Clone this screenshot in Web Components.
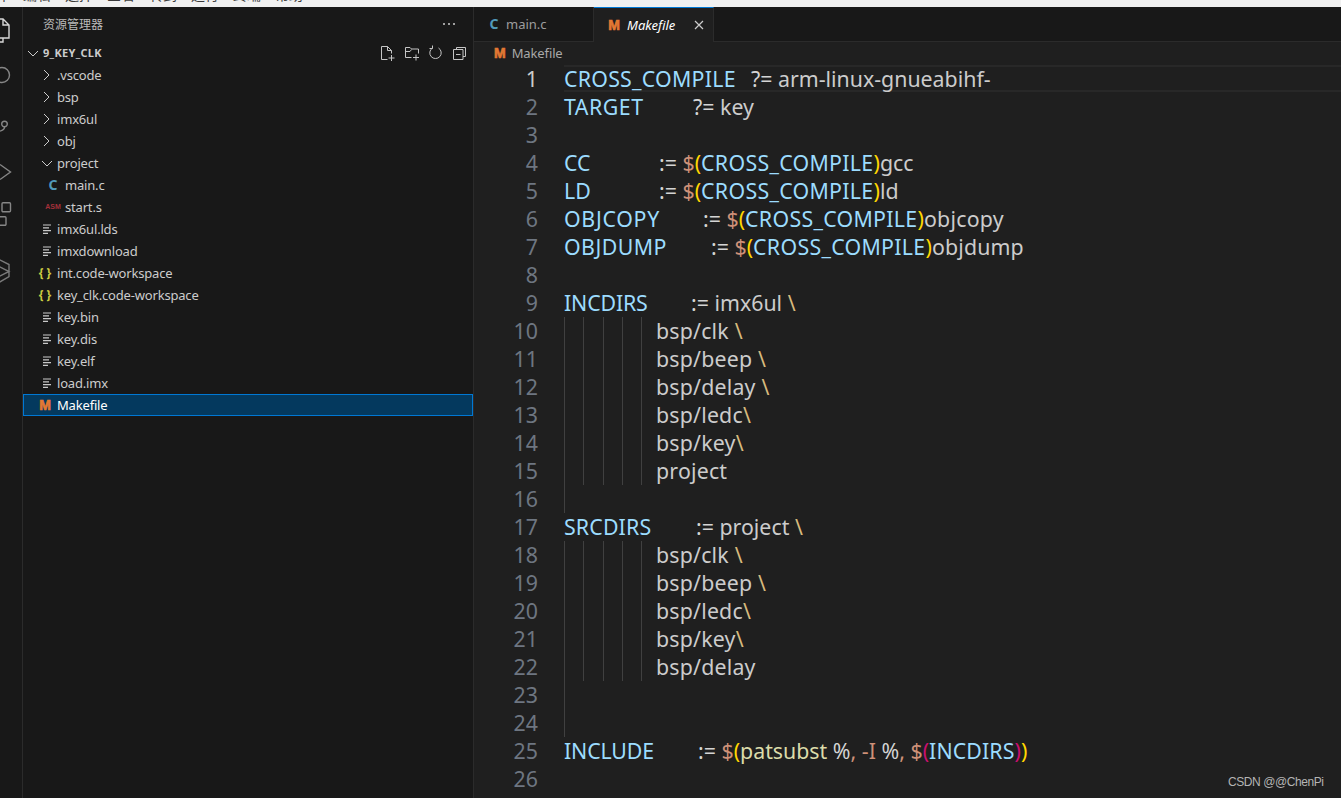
<!DOCTYPE html>
<html lang="en"><head><meta charset="utf-8"><title>Makefile - VS Code</title>
<style>html,body{margin:0;padding:0;background:#1f1f1f;overflow:hidden}</style></head>
<body>
<vs-app>
  <menu-strip slot="menu"></menu-strip>
  <activity-bar slot="activity"></activity-bar>
  <explorer-view slot="side"></explorer-view>
  <editor-view slot="main"></editor-view>
</vs-app>
<script>
const FONT = '"Noto Sans","Noto Sans CJK SC",sans-serif';
function def(name, html, setup){
  customElements.define(name, class extends HTMLElement{
    connectedCallback(){
      if(this.shadowRoot) return;
      const r=this.attachShadow({mode:'open'});
      r.innerHTML = typeof html==='function'?html(this):html;
      if(setup) setup(r,this);
    }
  });
}
const S = (w,h,body,extra='')=>`<svg width="${w}" height="${h}" viewBox="0 0 ${w} ${h}" fill="none" stroke="currentColor" stroke-width="1" ${extra}>${body}</svg>`;

def('vs-app',`<style>
:host{display:grid;grid-template-columns:23px 451px 867px;grid-template-rows:7px 791px;width:1341px;height:798px;overflow:hidden;font-family:${FONT};position:relative}
::slotted([slot=menu]){grid-column:1/4}
.mark{position:absolute;left:1228px;top:774px;font:12px/16px "Liberation Sans",sans-serif;color:#b4b4b4;letter-spacing:-.42px}
</style><slot name="menu"></slot><slot name="activity"></slot><slot name="side"></slot><slot name="main"></slot><div class="mark">CSDN @@ChenPi</div>`);

def('menu-strip',`<style>
:host{display:block;height:7px;background:#f0f0f0;overflow:hidden}
div{display:flex;margin:-14px 0 0 -19px;font:14px/16px "Noto Sans CJK SC",sans-serif;color:#3a3a3a;gap:14px}
</style><div><span>文件</span><span>编辑</span><span>选择</span><span>查看</span><span>转到</span><span>运行</span><span>终端</span><span>帮助</span></div>`);

const act=(body,col)=>`<svg width="22" height="48" viewBox="0 -24 22 48" fill="none" stroke="${col}" stroke-width="1.4">${body}</svg>`;
def('activity-bar',`<style>
:host{display:flex;flex-direction:column;background:#181818;border-right:1px solid #2b2b2b;overflow:hidden}
svg{display:block;flex:none}
</style>`+
act('<path d="M-6-12H3L9-6V7H3V11H-8M3-12V-6H9M3 7H-4"/>','#d7d7d7')+
act('<circle cx="2" cy="-4" r="7.5"/>','#868686')+
act('<circle cx="4.5" cy="-3" r="2.8"/><path d="M4.5 0C4.5 3 2 4 -2 4.5"/>','#868686')+
act('<path d="M0-10.5 10.5-3 0 4.5"/>','#868686')+
act('<rect x="2" y="-20.3" width="8.5" height="9" rx="1"/><rect x="-4" y="-6.3" width="10" height="8.5" rx="1"/>','#868686')+
act('<path d="M-2-12 9-6.5V5.5L-2 12M-2-5 9 .5-2 6"/>','#7a7a7a'));

def('explorer-view',`<style>
:host{display:block;background:#181818;border-right:1px solid #2b2b2b;overflow:hidden}
header{height:35px;display:flex;align-items:center;justify-content:space-between;padding:0 16px 2px 20px;box-sizing:border-box;font-size:12px;color:#bbb}
header svg{color:#ccc}
.tools{display:flex;gap:8px;color:#c5c5c5;padding-right:6px}
svg{display:block}
</style>
<header><span>资源管理器</span>${S(16,16,'<circle cx="3" cy="8" r="1" fill="currentColor" stroke="none"/><circle cx="8" cy="8" r="1" fill="currentColor" stroke="none"/><circle cx="13" cy="8" r="1" fill="currentColor" stroke="none"/>')}</header>
<tree-row kind="root" icon="down" label="9_KEY_CLK"><div class="tools" style="display:flex;gap:8px;color:#c5c5c5;padding-right:6px">
${S(16,16,'<path d="M8.500 14.500H2.500V1.500H8.500L12.500 5.500V8.500M8.500 1.500V5.500H12.500M12.500 10V16M9.500 13H15.500"/>')}
${S(16,16,'<path d="M8.500 12.500H2.500V2.500H7L8.500 4H15.500V8.500M2.500 6.500H7L8.500 4.500M13 9.500V15.500M10 12.500H16"/>')}
${S(16,16,'<path d="M5.500 3A5.700 5.700 0 1 0 11.500 3M5.500 .5V3.500H2.500"/>')}
${S(16,16,'<path d="M5.500 4.500V2.500H14.500V11.500H12M2.500 4.500H12V14.500H2.500ZM5 9.500H9.500"/>')}
</div></tree-row>
<tree-row icon="right" label=".vscode"></tree-row>
<tree-row icon="right" label="bsp"></tree-row>
<tree-row icon="right" label="imx6ul"></tree-row>
<tree-row icon="right" label="obj"></tree-row>
<tree-row icon="downs" label="project"></tree-row>
<tree-row kind="nested" icon="c" label="main.c"></tree-row>
<tree-row kind="nested" icon="asm" label="start.s"></tree-row>
<tree-row icon="lines" label="imx6ul.lds"></tree-row>
<tree-row icon="lines" label="imxdownload"></tree-row>
<tree-row icon="json" label="int.code-workspace"></tree-row>
<tree-row icon="json" label="key_clk.code-workspace"></tree-row>
<tree-row icon="lines" label="key.bin"></tree-row>
<tree-row icon="lines" label="key.dis"></tree-row>
<tree-row icon="lines" label="key.elf"></tree-row>
<tree-row icon="lines" label="load.imx"></tree-row>
<tree-row kind="selected" icon="m" label="Makefile"></tree-row>`);

const rowIcons={
  right:S(16,16,'<path d="M7 3 12 8 7 13"/>'),
  down:S(16,16,'<path d="M3 6 8 11 13 6"/>'),
  downs:S(16,16,'<path d="M5 6 10 11 15 6"/>'),
  lines:S(16,16,'<path d="M6 4H14M6 6.800H12M6 9.600H14M6 12.400H11" stroke="#c9c9c9" stroke-width="1.200"/>'),
  c:'<b class="c">C</b>',
  asm:'<b class="asm">ASM</b>',
  json:'<b class="json"><i>{</i> <u>}</u></b>',
  m:'<brand-m></brand-m>'
};
def('tree-row',h=>`<style>
:host{display:flex;align-items:center;height:22px;box-sizing:border-box;padding-left:14px;font-size:13px;line-height:22px;color:#ccc;white-space:pre;letter-spacing:-.18px}
:host([kind=root]){padding-left:2px;font-size:11px;font-weight:700;letter-spacing:.3px}
:host([kind=root]) .label{margin-left:2px}
:host([kind=nested]){padding-left:22px}
:host([kind=selected]){background:#04395e;outline:1px solid #0078d4;outline-offset:-1px;color:#fff}
.ico{width:16px;height:16px;flex:none;display:flex;align-items:center;justify-content:center;color:#ccc;letter-spacing:0}
.label{margin-left:4px;flex:1}
.c{font:700 14px/16px "Noto Sans",sans-serif;color:#519aba}
.asm{font:700 7px/16px "Liberation Sans",sans-serif;color:#a5303a;letter-spacing:-.1px}
.json{font:700 12px/16px "Noto Sans",sans-serif;white-space:pre;color:#cbcb41}
.json i{font-style:normal}.json u{text-decoration:none}
svg{display:block}
</style><span class="ico">${rowIcons[h.getAttribute('icon')]}</span><span class="label">${h.getAttribute('label')}</span><slot></slot>`);

def('brand-m',`<style>
:host{display:inline-block;font:900 14px/16px "Liberation Sans",sans-serif;color:#e37933;-webkit-text-stroke:.7px #e37933;letter-spacing:0}
</style>M`);

def('editor-view',`<style>
:host{display:flex;flex-direction:column;background:#1f1f1f;overflow:hidden;min-width:0}
.tabs{display:flex;height:35px;flex:none;background:#181818;box-sizing:border-box;box-shadow:inset 0 -1px #2b2b2b}
.crumb{height:23px;flex:none;box-sizing:border-box;padding:0 0 2px 20px;display:flex;align-items:center;gap:6px;font-size:13px;color:#a9a9a9;letter-spacing:-.12px}
.code{display:block;flex:none;height:760px}
</style>
<div class="tabs"><editor-tab icon="c" label="main.c"></editor-tab><editor-tab icon="m" label="Makefile" active></editor-tab></div>
<div class="crumb"><brand-m></brand-m><span>Makefile</span></div>
<div class="code"></div>`,(r)=>{
  const box=r.querySelector('.code');
  const CC=['v','CROSS_COMPILE',0,.3];
  const lines=[
   {t:[['v','CROSS_COMPILE',187,.25],['o','?= '],['p','arm-linux-gnueabihf-']],hl:1},
   {t:[['v','TARGET',129,.5],['o','?= '],['p','key']]},
   {},
   {t:[['v','CC',95],['o',':= '],['d','$'],['g','('],CC,['g',')'],['p','gcc']]},
   {t:[['v','LD',95],['o',':= '],['d','$'],['g','('],CC,['g',')'],['p','ld']]},
   {t:[['v','OBJCOPY',139,.7],['o',':= '],['d','$'],['g','('],CC,['g',')'],['p','objcopy',0,.25]]},
   {t:[['v','OBJDUMP',147,.45],['o',':= '],['d','$'],['g','('],CC,['g',')'],['p','objdump',0,.15]]},
   {},
   {t:[['v','INCDIRS',127,-.15],['o',':= '],['p','imx6ul '],['e','\\']]},
   ...['bsp/clk |','bsp/beep |','bsp/delay |','bsp/ledc|','bsp/key|','project'].map(s=>({ind:1,t:sp(s)})),
   {g:1},
   {t:[['v','SRCDIRS',132,.15],['o',':= '],['p','project '],['e','\\']]},
   ...['bsp/clk |','bsp/beep |','bsp/ledc|','bsp/key|','bsp/delay'].map(s=>({ind:1,t:sp(s)})),
   {g:1},{g:1},
   {t:[['v','INCLUDE',134,-.15],['o',':= '],['d','$'],['g','('],['f','patsubst '],['o','%'],['d',', -I '],['o','%'],['d',', $'],['m','('],['v','INCDIRS',0,.1],['m',')'],['g',')']]},
   {},
   {t:[['v','SFILES',121],['o',':= '],['d','$'],['g','('],['f','foreach '],['p','dir'],['d',', $'],['m','('],['v','SRCDIRS'],['m',')'],['d',', $'],['m','('],['f','wildcard '],['d','$'],['b','('],['p','dir'],['b',')'],['p','/*.S'],['m',')'],['g',')']]},
  ];
  function sp(s){const parts=s.split('|');const out=[['p',parts[0],0,.2]];if(parts.length>1)out.push(['e','\\']);return out;}
  lines.forEach((l,i)=>{
    const el=document.createElement('code-line');
    el.setAttribute('n',i+1);
    if(l.hl) el.setAttribute('current','');
    if(l.ind) el.setAttribute('guides','5');
    if(l.g) el.setAttribute('guides','1');
    el.data=l.t||[];
    box.appendChild(el);
  });
});

def('editor-tab',h=>`<style>
:host{display:flex;align-items:center;width:120px;box-sizing:border-box;height:34px;padding-left:11px;font-size:13px;color:#9d9d9d;background:#181818;border-right:1px solid #2b2b2b}
:host([active]){background:#1f1f1f;color:#fff;font-style:italic;height:35px;border-top:1px solid #0078d4;padding:0 0 1px 11px}
.ico{width:18px;flex:none;display:flex;justify-content:center}
.c{font:700 14px/16px "Noto Sans",sans-serif;color:#519aba;font-style:normal}
span.t{margin-left:${h.hasAttribute('active')?'4':'3'}px;flex:1}
svg{display:block;margin-right:6px;color:#ccc}
brand-m{font-style:normal}
</style><span class="ico">${h.getAttribute('icon')==='c'?'<b class="c">C</b>':'<brand-m></brand-m>'}</span><span class="t">${h.getAttribute('label')}</span>${h.hasAttribute('active')?S(16,16,'<path d="M4 4 12 12M12 4 4 12" stroke-width="1.200"/>'):''}`);

const G='linear-gradient(#404040,#404040)';
def('code-line',h=>`<style>
:host{display:flex;height:28px;font-size:21.33px;line-height:28px;white-space:pre;color:#ccc}
.n{width:64px;flex:none;text-align:right;color:#6e7681}
:host([current]) .n{color:#ccc}
.c{margin-left:26px;flex:1;min-width:0;box-sizing:border-box}
:host([current]) .c{box-shadow:inset 0 2px #282828,inset 0 -2px #282828;background:#1f1f1f;margin-bottom:1px}
:host([guides="1"]) .c{background:${G} 0 0/1px 100% no-repeat}
:host([guides="5"]) .c{padding-left:92px;background:${G} 0 0/1px 100% no-repeat,${G} 19px 0/1px 100% no-repeat,${G} 39px 0/1px 100% no-repeat,${G} 58px 0/1px 100% no-repeat,${G} 77px 0/1px 100% no-repeat}
.name{display:inline-block}
.v{color:#9cdcfe}.o{color:#d4d4d4}.p{color:#ccc}.d{color:#ce9178}.g{color:#ffd700}.m{color:#c8106e}.b{color:#179fff}.e{color:#d7ba7d}.f{color:#dcdcaa}
</style><span class="n">${h.getAttribute('n')}</span><span class="c"></span>`,(r,h)=>{
  const c=r.querySelector('.c');
  (h.data||[]).forEach(([k,t,w,ls])=>{
    const s=document.createElement('span');
    s.className=k+(w?' name':'');
    s.textContent=t;
    if(w) s.style.width=w+'px';
    if(ls) s.style.letterSpacing=ls+'px';
    c.appendChild(s);
  });
});
</script>
</body></html>
